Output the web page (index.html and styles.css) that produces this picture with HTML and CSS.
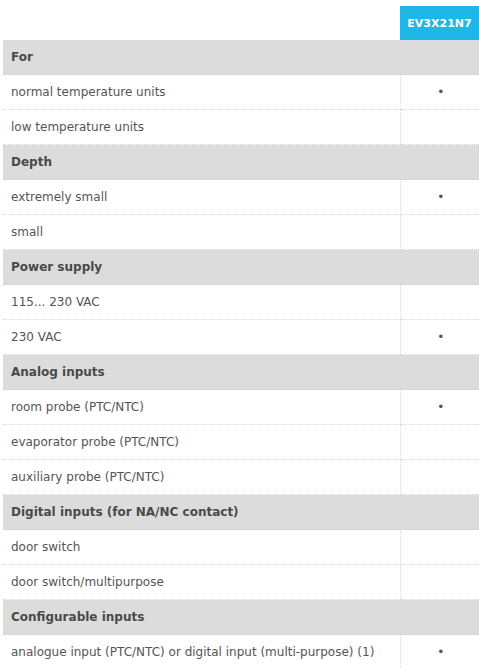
FILE: index.html
```html
<!DOCTYPE html>
<html>
<head>
<meta charset="utf-8">
<link rel="stylesheet" href="styles.css">
</head>
<body>
<table class="spec">
  <thead>
    <tr class="head"><th class="blank"></th><th class="model">EV3X21N7</th></tr>
  </thead>
  <tbody>
    <tr class="group"><td colspan="2">For</td></tr>
    <tr><td class="label">normal temperature units</td><td class="val">•</td></tr>
    <tr><td class="label">low temperature units</td><td class="val"></td></tr>
    <tr class="group"><td colspan="2">Depth</td></tr>
    <tr><td class="label">extremely small</td><td class="val">•</td></tr>
    <tr><td class="label">small</td><td class="val"></td></tr>
    <tr class="group"><td colspan="2">Power supply</td></tr>
    <tr><td class="label">115... 230 VAC</td><td class="val"></td></tr>
    <tr><td class="label">230 VAC</td><td class="val">•</td></tr>
    <tr class="group"><td colspan="2">Analog inputs</td></tr>
    <tr><td class="label">room probe (PTC/NTC)</td><td class="val">•</td></tr>
    <tr><td class="label">evaporator probe (PTC/NTC)</td><td class="val"></td></tr>
    <tr><td class="label">auxiliary probe (PTC/NTC)</td><td class="val"></td></tr>
    <tr class="group"><td colspan="2">Digital inputs (for NA/NC contact)</td></tr>
    <tr><td class="label">door switch</td><td class="val"></td></tr>
    <tr><td class="label">door switch/multipurpose</td><td class="val"></td></tr>
    <tr class="group"><td colspan="2">Configurable inputs</td></tr>
    <tr><td class="label">analogue input (PTC/NTC) or digital input (multi-purpose) (1)</td><td class="val">•</td></tr>
  </tbody>
</table>
</body>
</html>
```
FILE: styles.css
```css
html, body {
  margin: 0;
  padding: 0;
  background: #ffffff;
}
body {
  padding: 6px 0 0 3px;
  font-family: "DejaVu Sans", Verdana, sans-serif;
  font-size: 12px;
  color: #555555;
}
.spec {
  border-collapse: collapse;
  width: 476px;
  table-layout: fixed;
}
.spec th, .spec td {
  padding: 0 0 0 8px;
  height: 34px;
  vertical-align: middle;
  text-align: left;
}
.spec .blank {
  width: 389px;
}
.spec .model {
  width: 79px;
  background: #1fb6e8;
  color: #ffffff;
  font-weight: bold;
  font-size: 11px;
  text-align: center;
  padding: 0;
}
.spec tr.group td {
  background: #dcdcdc;
  font-weight: bold;
  color: #4a4a4a;
  height: 34px;
  border-bottom: 1px dotted #cfcfcf;
}
.spec td.label {
  border-bottom: 1px dotted #d8d8d8;
  border-right: 1px dotted #d8d8d8;
  white-space: nowrap;
}
.spec td.val {
  text-align: center;
  padding: 0 0 0 2px;
  border-bottom: 1px dotted #d8d8d8;
  font-size: 12px;
  color: #555555;
}
```
